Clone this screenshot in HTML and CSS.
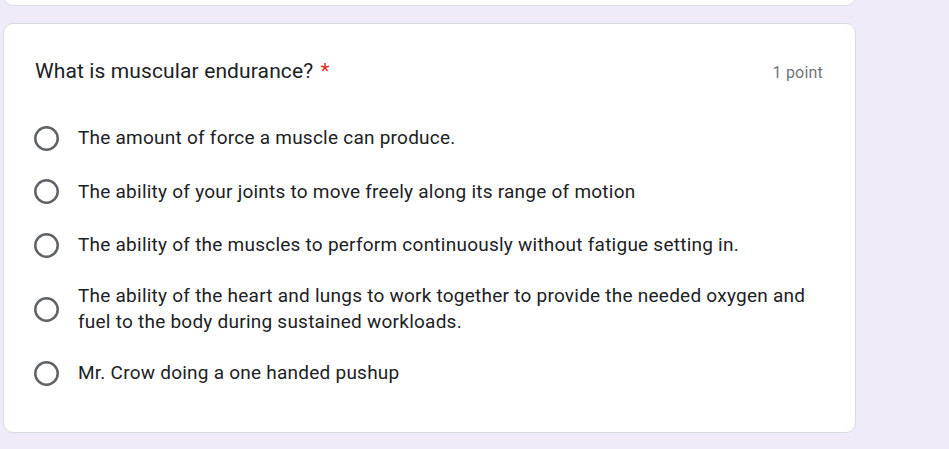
FILE: index.html
```html
<!DOCTYPE html>
<html lang="en">
<head>
<meta charset="utf-8">
<title>Quiz question</title>
<link rel="stylesheet" href="styles.css">
</head>
<body>
<div class="page">
  <div class="card card-prev"></div>
  <div class="card question">
    <div class="q-header">
      <div class="q-title">What is muscular endurance?<span class="req"> *</span></div>
      <div class="q-points">1 point</div>
    </div>
    <div class="options">
      <label class="option">
        <svg class="radio" viewBox="0 0 25 25" width="25" height="25"><circle cx="12.5" cy="12.5" r="11.25" fill="none" stroke="#5f6368" stroke-width="2.5"/></svg>
        <span class="opt-text">The amount of force a muscle can produce.</span>
      </label>
      <label class="option">
        <svg class="radio" viewBox="0 0 25 25" width="25" height="25"><circle cx="12.5" cy="12.5" r="11.25" fill="none" stroke="#5f6368" stroke-width="2.5"/></svg>
        <span class="opt-text">The ability of your joints to move freely along its range of motion</span>
      </label>
      <label class="option">
        <svg class="radio" viewBox="0 0 25 25" width="25" height="25"><circle cx="12.5" cy="12.5" r="11.25" fill="none" stroke="#5f6368" stroke-width="2.5"/></svg>
        <span class="opt-text">The ability of the muscles to perform continuously without fatigue setting in.</span>
      </label>
      <label class="option">
        <svg class="radio" viewBox="0 0 25 25" width="25" height="25"><circle cx="12.5" cy="12.5" r="11.25" fill="none" stroke="#5f6368" stroke-width="2.5"/></svg>
        <span class="opt-text">The ability of the heart and lungs to work together to provide the needed oxygen and fuel to the body during sustained workloads.</span>
      </label>
      <label class="option">
        <svg class="radio" viewBox="0 0 25 25" width="25" height="25"><circle cx="12.5" cy="12.5" r="11.25" fill="none" stroke="#5f6368" stroke-width="2.5"/></svg>
        <span class="opt-text">Mr. Crow doing a one handed pushup</span>
      </label>
    </div>
  </div>
</div>
</body>
</html>
```
FILE: styles.css
```css
html, body {
  margin: 0;
  padding: 0;
}
body {
  background: #efebf8;
  font-family: Roboto, "Liberation Sans", Arial, sans-serif;
  color: #202124;
  width: 949px;
  height: 449px;
  overflow: hidden;
}
.page {
  display: flex;
  flex-direction: column;
  gap: 17px;
  padding-left: 3px;
  width: 853px;
}
.card {
  background: #ffffff;
  border: 1px solid #dadce0;
  border-radius: 10px;
  box-sizing: border-box;
}
.card-prev {
  height: 40px;
  margin-top: -34px;
}
.question {
  padding: 32px 32px 38px 30px;
  height: 410px;
}
.q-header {
  display: flex;
  justify-content: space-between;
  align-items: baseline;
}
.q-title {
  font-size: 21px;
  line-height: 30px;
  letter-spacing: 0.12px;
  padding-left: 1px;
}
.req {
  color: #d93025;
  padding-left: 2px;
}
.q-points {
  font-size: 16px;
  color: #70757a;
  letter-spacing: 0.2px;
}
.options {
  display: flex;
  flex-direction: column;
  gap: 12.5px;
  margin-top: 31.5px;
}
.option {
  display: flex;
  align-items: center;
  min-height: 41px;
}
.radio {
  flex: none;
  width: 25px;
  height: 25px;
  margin-right: 19px;
}
.opt-text {
  font-size: 19px;
  line-height: 26px;
  letter-spacing: 0.24px;
  padding: 5px 0;
}
```
